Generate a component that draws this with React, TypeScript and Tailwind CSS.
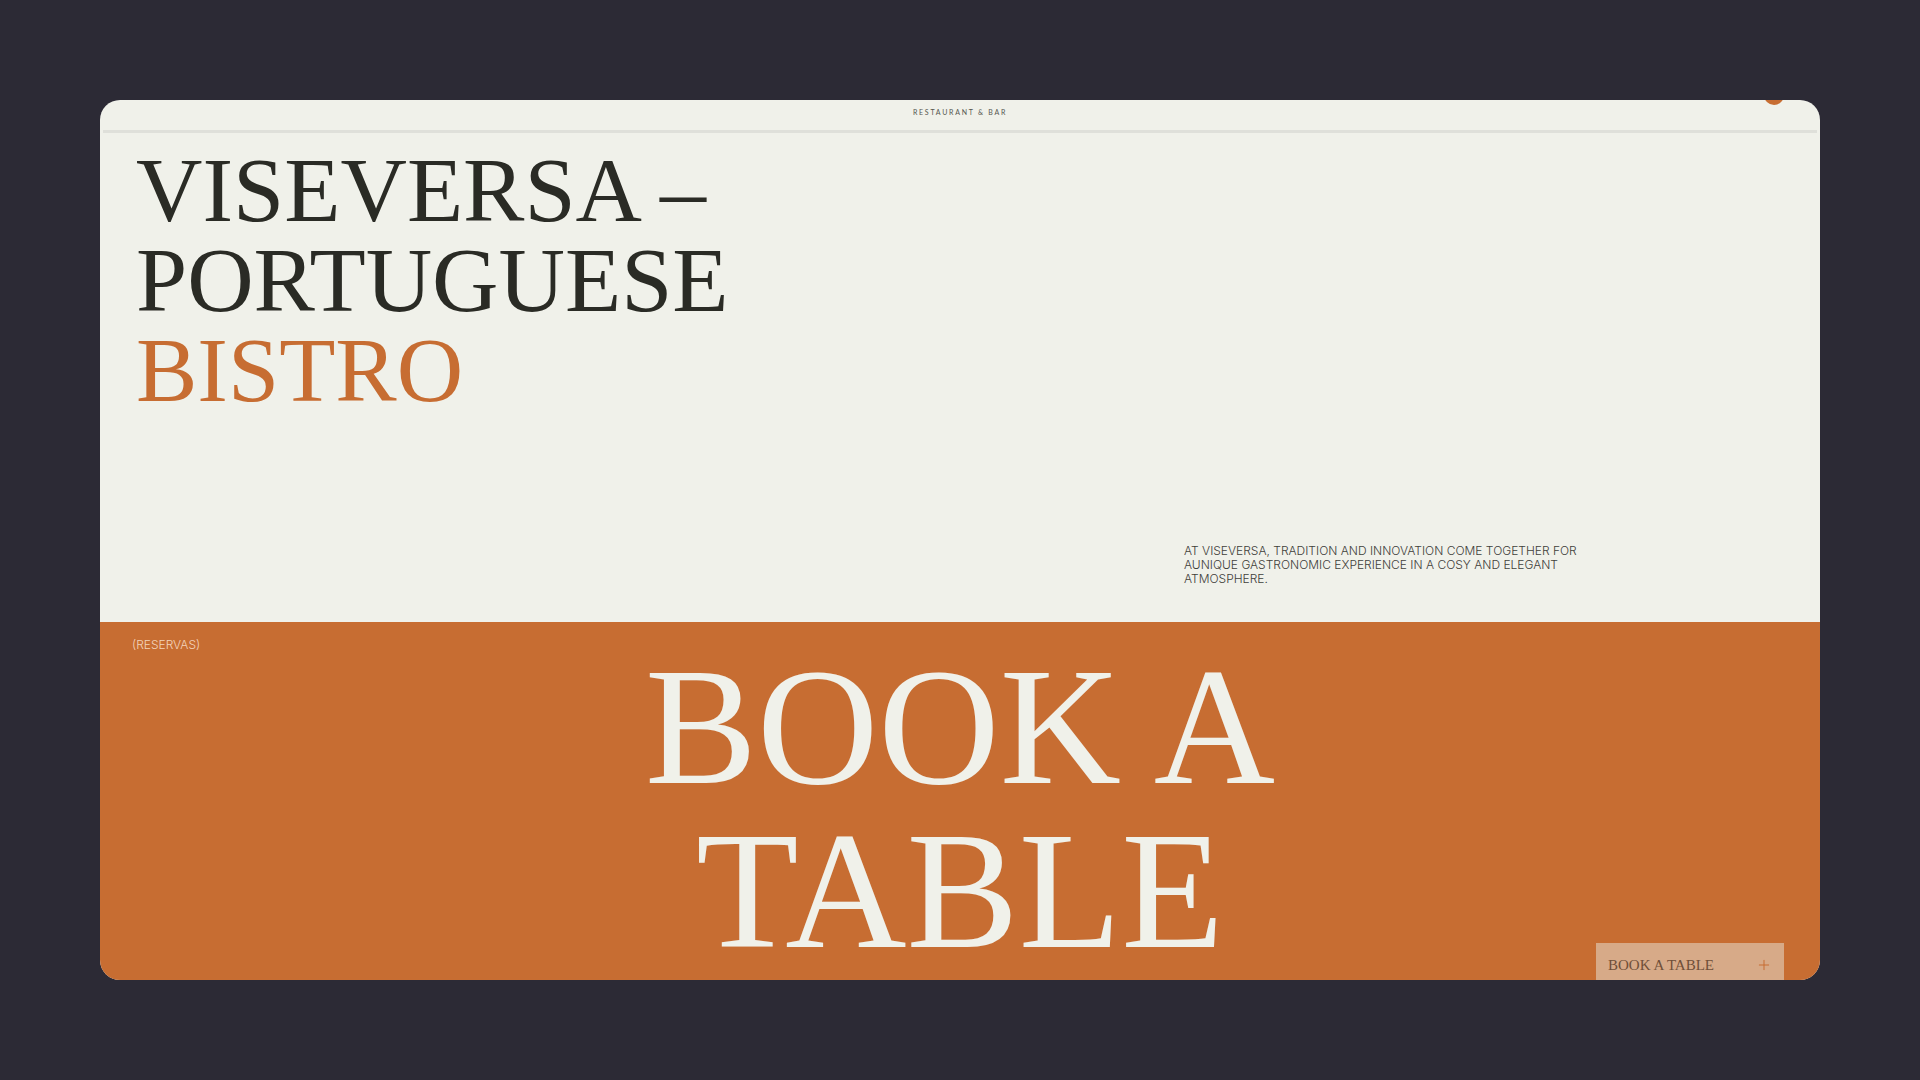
import { Plus } from 'lucide-react'

function Header() {
  return (
    <header className="relative h-8 px-1 text-center">
      <a href="#top" className="inline-block align-top pt-1 font-['Lato',sans-serif] text-[7px] leading-4 tracking-[0.25em] text-[#55564f]">
        RESTAURANT &amp; BAR
      </a>
      {/* Menu toggle, scrolled mostly out of view */}
      <button
        type="button"
        aria-label="Open menu"
        className="absolute -top-[15px] right-9 h-5 w-5 rounded-full bg-[#c76d32]"
      />
    </header>
  )
}

function Intro() {
  return (
    <section id="top" className="flex flex-1 flex-col justify-between px-9 pb-9 pt-3">
      <h1 className="font-['Liberation_Serif',serif] text-[92px] leading-[90px] text-[#2a2b25]">
        VISEVERSA –
        <br />
        PORTUGUESE
        <br />
        <span className="text-[#c76d32]">BISTRO</span>
      </h1>
      <p className="ml-auto mr-52 w-[392px] whitespace-nowrap font-['Inter',sans-serif] text-[12px] font-light leading-[14px] text-[#3f403a]">
        AT VISEVERSA, TRADITION AND INNOVATION COME TOGETHER FOR
        <br />
        AUNIQUE GASTRONOMIC EXPERIENCE IN A COSY AND ELEGANT
        <br />
        ATMOSPHERE.
      </p>
    </section>
  )
}

function Reservations() {
  return (
    <section id="reservas" className="relative bg-[#c76d32] px-8 pt-4 text-[#f0f1ea]">
      <p className="font-['Inter',sans-serif] text-[12px] font-light leading-[14px] text-[#f3d3bb]">(RESERVAS)</p>
      <h2 className="-mt-2 pb-2 text-center font-['Liberation_Serif',serif] text-[168px] leading-[164px]">
        BOOK A
        <br />
        TABLE
      </h2>
      <button
        type="button"
        className="absolute bottom-0 right-9 flex h-[37px] w-[188px] items-center justify-between bg-[#d7aa88] px-3 pt-1.5 font-['Liberation_Serif',serif] text-[15px] leading-5 text-[#6f4f38]"
      >
        BOOK A TABLE
        <Plus className="h-4 w-4 text-[#c76d32]" strokeWidth={1.5} />
      </button>
    </section>
  )
}

export default function App() {
  return (
    <div className="flex min-h-screen bg-[#2c2a35] p-[100px]">
      <main className="flex flex-1 flex-col overflow-hidden rounded-[20px] bg-[#f0f1ea]">
        <Header />
        <hr className="mx-[3px] -mt-0.5 border-t-[3px] border-[#dfe0da]" />
        <Intro />
        <Reservations />
      </main>
    </div>
  )
}
